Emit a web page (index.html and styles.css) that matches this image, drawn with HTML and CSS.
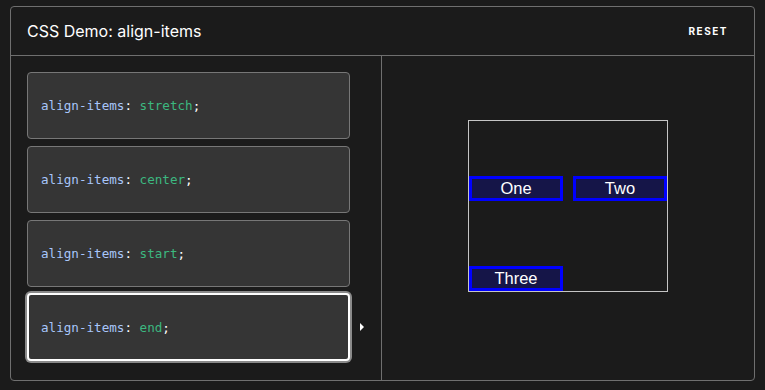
FILE: index.html
```html
<!DOCTYPE html>
<html lang="en">
<head>
    <meta charset="UTF-8">
    <meta name="viewport" content="width=device-width, initial-scale=1.0">
    <title>CSS Demo: align-items</title>
    <link rel="stylesheet" href="styles.css">
</head>
<body>
    <div class="demo">
        <header class="demo-header">
            <h1>CSS Demo: align-items</h1>
            <button class="reset">RESET</button>
        </header>
        <div class="demo-body">
            <div class="choices">
                <div class="choice"><code><span class="prop">align-items</span>: <span class="val">stretch</span>;</code></div>
                <div class="choice"><code><span class="prop">align-items</span>: <span class="val">center</span>;</code></div>
                <div class="choice"><code><span class="prop">align-items</span>: <span class="val">start</span>;</code></div>
                <div class="choice selected"><code><span class="prop">align-items</span>: <span class="val">end</span>;</code></div>
            </div>
            <div class="output">
                <div class="example-container">
                    <div class="item">One</div>
                    <div class="item">Two</div>
                    <div class="item">Three</div>
                </div>
            </div>
        </div>
    </div>
</body>
</html>
```

FILE: styles.css
```css
* {
    margin: 0;
    padding: 0;
    box-sizing: border-box;
}
body {
    background: #1b1b1b;
    color: #fff;
    font-family: 'Inter', sans-serif;
    padding: 6px 0 0 10px;
}
.demo {
    width: 745px;
    height: 375px;
    border: 1px solid #6f6f6f;
    border-radius: 4px;
    display: flex;
    flex-direction: column;
}
.demo-header {
    height: 49px;
    border-bottom: 1px solid #6f6f6f;
    display: flex;
    justify-content: space-between;
    align-items: center;
    padding: 0 16px;
}
.demo-header h1 {
    font-size: 16px;
    font-weight: 400;
}
.reset {
    background: none;
    border: none;
    color: #fff;
    font-family: 'Inter', sans-serif;
    font-size: 10px;
    font-weight: 700;
    letter-spacing: 1.5px;
    padding: 4px 10px;
    cursor: pointer;
}
.demo-body {
    flex: 1;
    display: flex;
}
.choices {
    width: 371px;
    border-right: 1px solid #6f6f6f;
    padding: 16px 31px 0 16px;
    display: flex;
    flex-direction: column;
    gap: 7px;
}
.choice {
    height: 67px;
    background: #353535;
    border: 1px solid #777;
    border-radius: 4px;
    display: flex;
    align-items: center;
    padding-left: 13px;
    position: relative;
}
.choice code {
    font-family: 'DejaVu Sans Mono', monospace;
    font-size: 12.6px;
    color: #fff;
}
.prop {
    color: #a8c6fa;
}
.val {
    color: #3cb880;
}
.choice.selected {
    height: 68px;
    margin-top: -1px;
    border: 2px solid #fff;
    box-shadow: 0 0 0 2px #8a8a8a;
    padding-left: 12px;
}
.choice.selected::after {
    content: '';
    position: absolute;
    left: 331px;
    top: 28px;
    border-left: 4px solid #fff;
    border-top: 4px solid transparent;
    border-bottom: 4px solid transparent;
}
.output {
    flex: 1;
    display: flex;
    justify-content: center;
    padding-top: 64px;
}
.example-container {
    width: 200px;
    height: 172px;
    border: 1px solid #c5c5c5;
    display: grid;
    grid-template-columns: 94px 94px;
    grid-auto-rows: 80px;
    gap: 10px;
    align-items: end;
}
.item {
    background: rgba(0, 0, 255, 0.2);
    border: 3px solid #0000ff;
    color: #fff;
    font-family: 'Liberation Sans', Arial, sans-serif;
    font-size: 16.5px;
    line-height: 19px;
    text-align: center;
}
```
